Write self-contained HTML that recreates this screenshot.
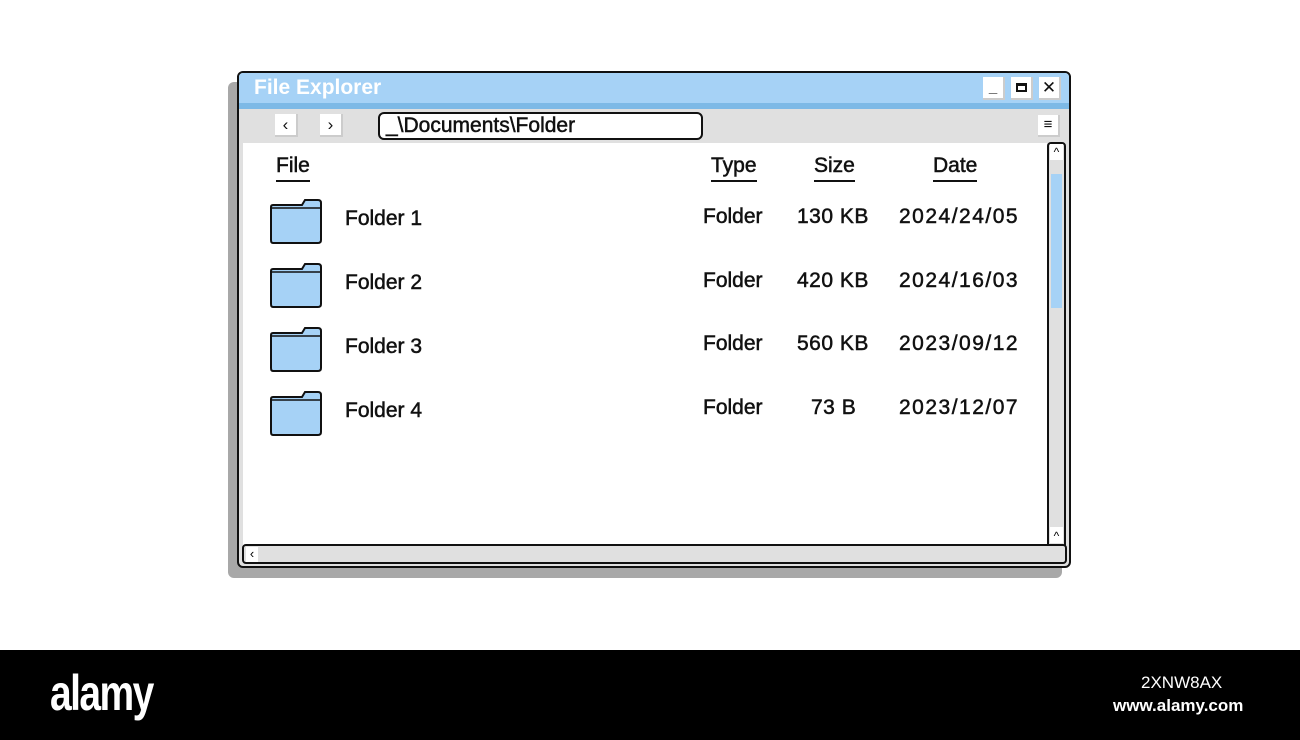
<!DOCTYPE html>
<html><head><meta charset="utf-8"><style>
*{margin:0;padding:0;box-sizing:border-box}
body{width:1300px;height:740px;background:#fff;position:relative;overflow:hidden;font-family:"Liberation Sans",sans-serif}
.abs{position:absolute}
.t{font-size:21px;color:#111;position:absolute;white-space:nowrap;-webkit-text-stroke:0.5px #111}
.d{letter-spacing:1.5px}
.h{font-size:21px;color:#111;position:absolute;border-bottom:2px solid #111;padding-bottom:2px;-webkit-text-stroke:0.5px #111}
.btn{position:absolute;background:#fff;border-right:2px solid #ccc;border-bottom:2px solid #ccc;font-size:15px;text-align:center;color:#111}
</style></head><body>
<div class="abs" style="left:228px;top:82px;width:834px;height:496px;background:#a8a8a8;border-radius:6px"></div>
<div class="abs" style="left:237px;top:71px;width:834px;height:497px;background:#e0e0e0;border:2px solid #111;border-radius:6px;overflow:hidden">
  <div class="abs" style="left:0;top:0;width:830px;height:30px;background:#a6d2f6"></div>
  <div class="abs" style="left:0;top:30px;width:830px;height:6px;background:#7db9e6"></div>
  <div class="abs" style="left:15px;top:3px;font-size:21px;font-weight:bold;color:#fff">File Explorer</div>
  <div class="btn" style="left:744px;top:4px;width:22px;height:23px;font-weight:bold;line-height:22px">_</div>
  <div class="btn" style="left:772px;top:4px;width:22px;height:23px;line-height:22px"><span style="display:inline-block;width:11px;height:9px;border:2px solid #111;border-top-width:3px"></span></div>
  <div class="btn" style="left:800px;top:4px;width:22px;height:23px;line-height:22px;font-size:17px">✕</div>
  <div class="btn" style="left:36px;top:41px;width:23px;height:23px;line-height:21px;font-size:17px">‹</div>
  <div class="btn" style="left:81px;top:41px;width:23px;height:23px;line-height:21px;font-size:17px">›</div>
  <div class="abs" style="left:139px;top:39px;width:325px;height:28px;background:#fff;border:2px solid #111;border-radius:6px;font-size:21px;padding-left:6px;line-height:24px;color:#111;-webkit-text-stroke:0.5px #111">_\Documents\Folder</div>
  <div class="btn" style="left:799px;top:42px;width:22px;height:22px;line-height:20px;font-size:15px">≡</div>
  <div class="abs" style="left:4px;top:70px;width:804px;height:402px;background:#fff"></div>
  <div class="abs" style="left:808px;top:69px;width:19px;height:420px;border:2px solid #111;border-radius:4px;background:#e0e0e0">
    <div class="abs" style="left:1px;top:0;width:13px;height:16px;background:#fff;font-size:12px;text-align:center;line-height:16px">^</div>
    <div class="abs" style="left:2px;top:30px;width:11px;height:134px;background:#a6d2f6"></div>
    <div class="abs" style="left:1px;top:383px;width:13px;height:16px;background:#fff;font-size:12px;text-align:center;line-height:18px">^</div>
  </div>
  <div class="abs" style="left:3px;top:471px;width:825px;height:20px;border:2px solid #111;border-radius:4px;background:#e0e0e0">
    <div class="abs" style="left:2px;top:1px;width:12px;height:15px;background:#fff;font-size:13px;line-height:14px;text-align:center">‹</div>
  </div>
</div>
<div class="h" style="left:276px;top:154px">File</div>
<div class="h" style="left:711px;top:154px">Type</div>
<div class="h" style="left:814px;top:154px">Size</div>
<div class="h" style="left:933px;top:154px">Date</div>

<svg class="abs" style="left:268px;top:198px" width="56" height="48"><path d="M3 9 Q3 7 5 7 L34 7 L37 2 L50 2 Q53 2 53 5 L53 42 Q53 45 50 45 L5 45 Q3 45 3 42 Z" fill="#a6d2f6" stroke="#111" stroke-width="2"/><path d="M3 10 L53 10" stroke="#111" stroke-width="1.5"/></svg>
<svg class="abs" style="left:268px;top:262px" width="56" height="48"><path d="M3 9 Q3 7 5 7 L34 7 L37 2 L50 2 Q53 2 53 5 L53 42 Q53 45 50 45 L5 45 Q3 45 3 42 Z" fill="#a6d2f6" stroke="#111" stroke-width="2"/><path d="M3 10 L53 10" stroke="#111" stroke-width="1.5"/></svg>
<svg class="abs" style="left:268px;top:326px" width="56" height="48"><path d="M3 9 Q3 7 5 7 L34 7 L37 2 L50 2 Q53 2 53 5 L53 42 Q53 45 50 45 L5 45 Q3 45 3 42 Z" fill="#a6d2f6" stroke="#111" stroke-width="2"/><path d="M3 10 L53 10" stroke="#111" stroke-width="1.5"/></svg>
<svg class="abs" style="left:268px;top:390px" width="56" height="48"><path d="M3 9 Q3 7 5 7 L34 7 L37 2 L50 2 Q53 2 53 5 L53 42 Q53 45 50 45 L5 45 Q3 45 3 42 Z" fill="#a6d2f6" stroke="#111" stroke-width="2"/><path d="M3 10 L53 10" stroke="#111" stroke-width="1.5"/></svg>

<div class="t" style="left:345px;top:207px">Folder 1</div>
<div class="t" style="left:345px;top:271px">Folder 2</div>
<div class="t" style="left:345px;top:335px">Folder 3</div>
<div class="t" style="left:345px;top:399px">Folder 4</div>
<div class="t" style="left:703px;top:205px">Folder</div>
<div class="t" style="left:703px;top:269px">Folder</div>
<div class="t" style="left:703px;top:332px">Folder</div>
<div class="t" style="left:703px;top:396px">Folder</div>
<div class="t" style="left:797px;top:205px;letter-spacing:0.5px">130 KB</div>
<div class="t" style="left:797px;top:269px;letter-spacing:0.5px">420 KB</div>
<div class="t" style="left:797px;top:332px;letter-spacing:0.5px">560 KB</div>
<div class="t" style="left:811px;top:396px;letter-spacing:0.5px">73 B</div>
<div class="t d" style="left:899px;top:205px">2024/24/05</div>
<div class="t d" style="left:899px;top:269px">2024/16/03</div>
<div class="t d" style="left:899px;top:332px">2023/09/12</div>
<div class="t d" style="left:899px;top:396px">2023/12/07</div>

<div class="abs" style="left:0;top:650px;width:1300px;height:90px;background:#000"></div>
<div class="abs" style="left:50px;top:664px;font-size:50px;font-weight:bold;color:#fff;letter-spacing:-2px;transform:scaleX(0.78);transform-origin:left">alamy</div>
<div class="abs" style="left:1141px;top:673px;font-size:17px;color:#fff">2XNW8AX</div>
<div class="abs" style="left:1113px;top:696px;font-size:17px;font-weight:bold;color:#fff">www.alamy.com</div>
</body></html>
